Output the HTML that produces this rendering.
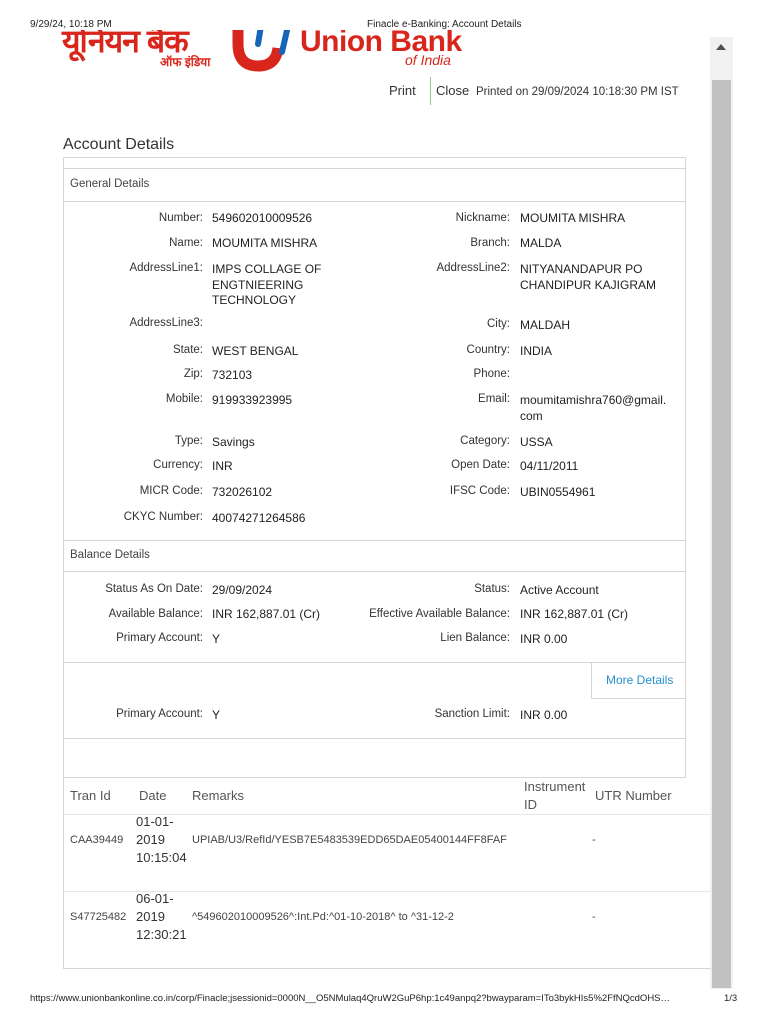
<!DOCTYPE html>
<html><head><meta charset="utf-8"><style>
*{margin:0;padding:0;box-sizing:border-box}
body{width:768px;height:1024px;position:relative;background:#fff;font-family:"Liberation Sans","Noto Sans CJK SC",sans-serif;color:#333;overflow:hidden}
div{position:absolute;white-space:nowrap}
.l{font-size:11.5px;color:#333;text-align:right;line-height:14px}
.a{right:565px}.b{right:258px}
.v{font-size:12px;color:#222;line-height:15.5px}
.va{left:212px}.vb{left:520px}
.hl{background:#d6d6d6;height:1px}
.vl{background:#d6d6d6;width:1px}
.t{font-size:13px;color:#555;line-height:18px}
.s{font-size:11px;color:#444;line-height:18px}
</style></head><body>

<!-- logo (clipped at top) -->
<div style="left:0;top:30px;width:700px;height:45px;overflow:hidden">
<div style="left:62px;top:-7px;font-size:32px;font-weight:bold;color:#d9261c;line-height:36px;letter-spacing:-1px">यूनियन बैंक</div>
<div style="left:160px;top:23px;font-size:12px;font-weight:bold;color:#d9261c">ऑफ इंडिया</div>
<svg style="position:absolute;left:230px;top:-8px" width="66" height="52"><path d="M8 4 L8 22 Q8 44 28 44 Q46 44 48 26" stroke="#d9261c" stroke-width="11" fill="none"/><path d="M31 4 L28 22" stroke="#1565b8" stroke-width="6" stroke-linecap="round"/><path d="M58 4 L52 30" stroke="#1565b8" stroke-width="6" stroke-linecap="round"/></svg>
<div style="left:300px;top:-5px;font-size:30px;font-weight:bold;color:#d9261c;line-height:34px;letter-spacing:-0.5px">Union Bank</div>
<div style="left:405px;top:22px;font-size:14px;color:#d9261c;font-style:italic">of India</div>
</div>
<div style="left:30px;top:19px;font-size:10px;color:#222">9/29/24, 10:18 PM</div>
<div style="left:367px;top:19px;font-size:10px;color:#222">Finacle e-Banking: Account Details</div>

<div style="left:389px;top:83px;font-size:13px;color:#333">Print</div>
<div class="vl" style="left:430px;top:77px;height:28px;background:#8c8"></div>
<div style="left:436px;top:83px;font-size:13px;color:#333">Close</div>
<div style="left:476px;top:86px;font-size:11.5px;color:#333">Printed on 29/09/2024 10:18:30 PM IST</div>

<div style="left:63px;top:136px;font-size:16px;color:#333">Account Details</div>

<!-- scrollbar -->
<div style="left:710px;top:37px;width:23px;height:952px;background:#f1f1f1"></div>
<div style="left:712px;top:80px;width:19px;height:908px;background:#c1c1c1"></div>
<div style="left:716px;top:44px;width:0;height:0;border-left:5px solid transparent;border-right:5px solid transparent;border-bottom:6px solid #505050"></div>

<!-- boxes -->
<div style="left:63px;top:157px;width:623px;height:621px;border:1px solid #d6d6d6"></div>
<div class="hl" style="left:63px;top:168px;width:623px"></div>
<div class="hl" style="left:63px;top:201px;width:623px"></div>
<div class="hl" style="left:63px;top:540px;width:623px"></div>
<div class="hl" style="left:63px;top:571px;width:623px"></div>
<div class="hl" style="left:63px;top:662px;width:623px"></div>
<div style="left:591px;top:662px;width:95px;height:37px;border-left:1px solid #d6d6d6;border-bottom:1px solid #d6d6d6"></div>
<div class="hl" style="left:63px;top:738px;width:623px"></div>
<div style="left:63px;top:778px;width:648px;height:191px;border-left:1px solid #d6d6d6;border-bottom:1px solid #d6d6d6"></div>
<div class="hl" style="left:63px;top:814px;width:648px;background:#e6e6e6"></div>
<div class="hl" style="left:63px;top:891px;width:648px;background:#e6e6e6"></div>

<div style="left:70px;top:178px;font-size:11.5px;color:#444">General Details</div>
<div style="left:70px;top:549px;font-size:11.5px;color:#444">Balance Details</div>

<div class="l a" style="top:211px">Number:</div><div class="v va" style="top:211px">549602010009526</div>
<div class="l b" style="top:211px">Nickname:</div><div class="v vb" style="top:211px">MOUMITA MISHRA</div>
<div class="l a" style="top:236px">Name:</div><div class="v va" style="top:236px">MOUMITA MISHRA</div>
<div class="l b" style="top:236px">Branch:</div><div class="v vb" style="top:236px">MALDA</div>
<div class="l a" style="top:261px">AddressLine1:</div><div class="v va" style="top:262px">IMPS COLLAGE OF<br>ENGTNIEERING<br>TECHNOLOGY</div>
<div class="l b" style="top:261px">AddressLine2:</div><div class="v vb" style="top:262px">NITYANANDAPUR PO<br>CHANDIPUR KAJIGRAM</div>
<div class="l a" style="top:316px">AddressLine3:</div>
<div class="l b" style="top:317px">City:</div><div class="v vb" style="top:318px">MALDAH</div>
<div class="l a" style="top:343px">State:</div><div class="v va" style="top:344px">WEST BENGAL</div>
<div class="l b" style="top:343px">Country:</div><div class="v vb" style="top:344px">INDIA</div>
<div class="l a" style="top:367px">Zip:</div><div class="v va" style="top:368px">732103</div>
<div class="l b" style="top:367px">Phone:</div>
<div class="l a" style="top:392px">Mobile:</div><div class="v va" style="top:393px">919933923995</div>
<div class="l b" style="top:392px">Email:</div><div class="v vb" style="top:393px">moumitamishra760@gmail.<br>com</div>
<div class="l a" style="top:434px">Type:</div><div class="v va" style="top:435px">Savings</div>
<div class="l b" style="top:434px">Category:</div><div class="v vb" style="top:435px">USSA</div>
<div class="l a" style="top:458px">Currency:</div><div class="v va" style="top:459px">INR</div>
<div class="l b" style="top:458px">Open Date:</div><div class="v vb" style="top:459px">04/11/2011</div>
<div class="l a" style="top:484px">MICR Code:</div><div class="v va" style="top:485px">732026102</div>
<div class="l b" style="top:484px">IFSC Code:</div><div class="v vb" style="top:485px">UBIN0554961</div>
<div class="l a" style="top:510px">CKYC Number:</div><div class="v va" style="top:511px">40074271264586</div>

<div class="l a" style="top:582px">Status As On Date:</div><div class="v va" style="top:583px">29/09/2024</div>
<div class="l b" style="top:582px">Status:</div><div class="v vb" style="top:583px">Active Account</div>
<div class="l a" style="top:607px">Available Balance:</div><div class="v va" style="top:607px">INR 162,887.01 (Cr)</div>
<div class="l b" style="top:607px">Effective Available Balance:</div><div class="v vb" style="top:607px">INR 162,887.01 (Cr)</div>
<div class="l a" style="top:631px">Primary Account:</div><div class="v va" style="top:632px">Y</div>
<div class="l b" style="top:631px">Lien Balance:</div><div class="v vb" style="top:632px">INR 0.00</div>
<div style="left:606px;top:673px;font-size:12px;color:#2a8fcf">More Details</div>
<div class="l a" style="top:707px">Primary Account:</div><div class="v va" style="top:708px">Y</div>
<div class="l b" style="top:707px">Sanction Limit:</div><div class="v vb" style="top:708px">INR 0.00</div>

<div class="t" style="left:70px;top:787px">Tran Id</div>
<div class="t" style="left:139px;top:787px">Date</div>
<div class="t" style="left:192px;top:787px">Remarks</div>
<div class="t" style="left:524px;top:778px">Instrument<br>ID</div>
<div class="t" style="left:595px;top:787px">UTR Number</div>

<div class="s" style="left:70px;top:831px">CAA39449</div>
<div class="t" style="left:136px;top:813px;color:#333">01-01-<br>2019<br>10:15:04</div>
<div class="s" style="left:192px;top:831px">UPIAB/U3/RefId/YESB7E5483539EDD65DAE05400144FF8FAF</div>
<div class="s" style="left:592px;top:831px">-</div>

<div class="s" style="left:70px;top:908px">S47725482</div>
<div class="t" style="left:136px;top:890px;color:#333">06-01-<br>2019<br>12:30:21</div>
<div class="s" style="left:192px;top:908px">^549602010009526^:Int.Pd:^01-10-2018^ to ^31-12-2</div>
<div class="s" style="left:592px;top:908px">-</div>

<div style="left:30px;top:993px;font-size:9.5px;color:#222">https://www.unionbankonline.co.in/corp/Finacle;jsessionid=0000N__O5NMulaq4QruW2GuP6hp:1c49anpq2?bwayparam=ITo3bykHIs5%2FfNQcdOHS…</div>
<div style="left:724px;top:993px;font-size:9.5px;color:#222">1/3</div>
</body></html>
